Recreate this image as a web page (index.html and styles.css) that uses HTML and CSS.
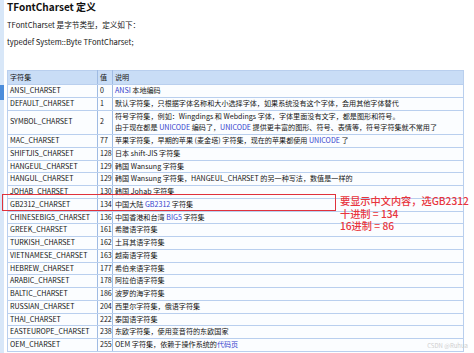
FILE: index.html
```html
<!DOCTYPE html>
<html lang="zh-CN">
<head>
    <meta charset="UTF-8">
    <meta name="viewport" content="width=device-width, initial-scale=1.0">
    <title>TFontCharset 定义</title>
    <link rel="stylesheet" href="styles.css">
</head>
<body>
    <div class="rail"><div class="rail-mark"></div></div>

    <div class="doc">
        <h1>TFontCharset 定义</h1>
        <p>TFontCharset 是字节类型，定义如下：</p>
        <p>typedef System::Byte TFontCharset;</p>

        <table class="charsets">
            <tr class="head">
                <td class="name">字符集</td>
                <td class="val">值</td>
                <td>说明</td>
            </tr>
            <tr><td>ANSI_CHARSET</td><td>0</td><td><a>ANSI</a> 本地编码</td></tr>
            <tr><td>DEFAULT_CHARSET</td><td>1</td><td>默认字符集，只根据字体名称和大小选择字体，如果系统没有这个字体，会用其他字体替代</td></tr>
            <tr><td>SYMBOL_CHARSET</td><td>2</td><td>符号字符集，例如：Wingdings 和 Webdings 字体，字体里面没有文字，都是图形和符号。<br>由于现在都是 <a>UNICODE</a> 编码了，<a>UNICODE</a> 提供更丰富的图形、符号、表情等，符号字符集就不常用了</td></tr>
            <tr><td>MAC_CHARSET</td><td>77</td><td>苹果字符集，早期的苹果 (麦金塔) 字符集，现在的苹果都使用 <a>UNICODE</a> 了</td></tr>
            <tr><td>SHIFTJIS_CHARSET</td><td>128</td><td>日本 shift-JIS 字符集</td></tr>
            <tr><td>HANGEUL_CHARSET</td><td>129</td><td>韩国 Wansung 字符集</td></tr>
            <tr><td>HANGUL_CHARSET</td><td>129</td><td>韩国 Wansung 字符集，HANGEUL_CHARSET 的另一种写法，数值是一样的</td></tr>
            <tr><td>JOHAB_CHARSET</td><td>130</td><td>韩国 Johab 字符集</td></tr>
            <tr><td>GB2312_CHARSET</td><td>134</td><td>中国大陆 <a>GB2312</a> 字符集</td></tr>
            <tr><td>CHINESEBIG5_CHARSET</td><td>136</td><td>中国香港和台湾 <a>BIG5</a> 字符集</td></tr>
            <tr><td>GREEK_CHARSET</td><td>161</td><td>希腊语字符集</td></tr>
            <tr><td>TURKISH_CHARSET</td><td>162</td><td>土耳其语字符集</td></tr>
            <tr><td>VIETNAMESE_CHARSET</td><td>163</td><td>越南语字符集</td></tr>
            <tr><td>HEBREW_CHARSET</td><td>177</td><td>希伯来语字符集</td></tr>
            <tr><td>ARABIC_CHARSET</td><td>178</td><td>阿拉伯语字符集</td></tr>
            <tr><td>BALTIC_CHARSET</td><td>186</td><td>波罗的海字符集</td></tr>
            <tr><td>RUSSIAN_CHARSET</td><td>204</td><td>西里尔字符集，俄语字符集</td></tr>
            <tr><td>THAI_CHARSET</td><td>222</td><td>泰国语字符集</td></tr>
            <tr><td>EASTEUROPE_CHARSET</td><td>238</td><td>东欧字符集，使用变音符的东欧国家</td></tr>
            <tr><td>OEM_CHARSET</td><td>255</td><td>OEM 字符集，依赖于操作系统的<a>代码页</a></td></tr>
        </table>
    </div>

    <!-- annotation drawn over the screenshot -->
    <div class="mark-box"></div>
    <div class="mark-note">
        <div>要显示中文内容，选GB2312</div>
        <div>十进制 = 134</div>
        <div>16进制 = 86</div>
    </div>

    <div class="watermark">CSDN @Ruhua</div>
</body>
</html>
```

FILE: styles.css
```css
body {
    margin: 0;
    width: 474px;
    height: 353px;
    overflow: hidden;
    display: flex;
    background-color: #ffffff;
    color: #151515;
    font-family: "Noto Sans CJK SC", "Noto Sans", sans-serif;
    position: relative;
}
.rail {
    width: 4px;
    height: 353px;
    background-color: #d8e7f8;
    flex-shrink: 0;
}
.rail-mark {
    margin-top: 85px;
    height: 15px;
    background-color: #4c8ddb;
}
.doc {
    padding-left: 3px;
    flex: 1;
}
h1 {
    margin: 0;
    font-size: 10px;
    line-height: 14px;
    font-weight: bold;
    color: #111;
}
p {
    margin: 5px 0 0;
    font-size: 7.6px;
    line-height: 12px;
}
.charsets {
    margin-top: 22px;
    width: 457px;
    table-layout: fixed;
    border-collapse: collapse;
    font-size: 7.1px;
    line-height: 11.75px;
    background-color: #fbfdff;
}
.charsets td {
    border: 1px solid #b9cfee;
    padding: 0 2px;
    white-space: nowrap;
    overflow: hidden;
    vertical-align: middle;
}
.charsets td:nth-child(1),
.charsets td:nth-child(2) {
    border-right-color: #9fbbe3;
}
.charsets td.name {
    width: 85px;
}
.charsets td.val {
    width: 10px;
}
.charsets .head td {
    background-color: #c9ddf6;
    line-height: 13px;
}
.charsets a {
    color: #3440cc;
}
.mark-box {
    position: absolute;
    left: 2px;
    top: 194px;
    width: 332px;
    height: 15px;
    border: 1.5px solid #e0323c;
}
.mark-note {
    position: absolute;
    left: 340px;
    top: 195px;
    font-size: 10.2px;
    line-height: 12.7px;
    font-weight: 500;
    color: #e8343c;
    white-space: nowrap;
}
.watermark {
    position: absolute;
    right: 6px;
    bottom: 3px;
    font-size: 6px;
    color: #cfcfcf;
}
```
